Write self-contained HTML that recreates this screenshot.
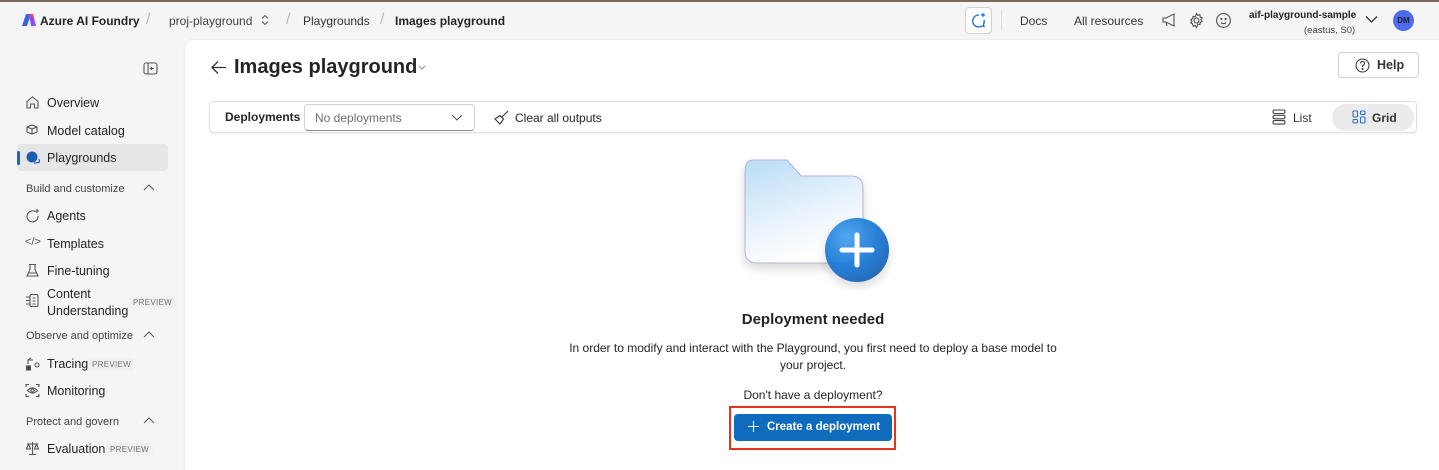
<!DOCTYPE html>
<html><head><meta charset="utf-8"><style>
*{box-sizing:border-box;margin:0;padding:0}
body{width:1439px;height:463px;overflow:hidden;background:#f5f5f5;font-family:"Liberation Sans",sans-serif;color:#242424;position:relative;font-size:12px}
.a{position:absolute;white-space:nowrap}
.top{position:absolute;left:0;top:0;width:1439px;height:2px;background:#7a6a5a}
.card{position:absolute;left:185px;top:40px;width:1254px;height:430px;background:#fff;border-radius:8px 0 0 0;box-shadow:0 0 2px rgba(0,0,0,.12)}
.sep{color:#bbb;font-size:16px}
.nav{font-size:12.5px;color:#242424}
.sec{font-size:11px;color:#424242}
.pv{font-size:8px;color:#707070;background:#f0f0f0;border-radius:4px;padding:2px 4px;letter-spacing:.3px}
svg{position:absolute}
</style></head><body>
<div class="top"></div>
<svg style="left:22px;top:13px" width="14" height="14" viewBox="0 0 14 14"><path d="M4 1h5l-4 12H0z" fill="#3b62e8"/><path d="M7 1h4l3 12H9z" fill="#8b4ef0"/><path d="M8 1h3l1 4H7z" fill="#e0408a"/></svg>
<div class="a" style="left:40px;top:14px;font-size:12px;font-weight:bold">Azure AI Foundry</div>
<div class="a sep" style="left:146px;top:11px">/</div>
<div class="a" style="left:169px;top:14px;color:#424242;font-size:12px">proj-playground</div>
<svg style="left:261px;top:14px" width="8" height="12" viewBox="0 0 8 12" fill="none" stroke="#555" stroke-width="1"><path d="M1 4.5l3-3 3 3M1 7.5l3 3 3-3"/></svg>
<div class="a sep" style="left:286px;top:11px">/</div>
<div class="a" style="left:303px;top:14px;color:#333;font-size:12px">Playgrounds</div>
<div class="a sep" style="left:380px;top:11px">/</div>
<div class="a" style="left:395px;top:14px;font-weight:bold;font-size:12px">Images playground</div>
<div class="a" style="left:965px;top:7px;width:27px;height:27px;border:1px solid #d1d1d1;border-radius:4px;background:#fff"></div>
<svg style="left:970px;top:12px" width="17" height="17" viewBox="0 0 17 17"><path d="M9 3a6 6 0 1 0 3 11l2 .5-.5-2A6 6 0 0 0 14 8" fill="none" stroke="#1a6fd6" stroke-width="1.3"/><path d="M13 1v4M11 3h4" stroke="#1a6fd6" stroke-width="1.2"/></svg>
<div class="a" style="left:1001px;top:10px;width:1px;height:20px;background:#ddd"></div>
<div class="a" style="left:1020px;top:14px;color:#333;font-size:12px">Docs</div>
<div class="a" style="left:1074px;top:14px;color:#333;font-size:12px">All resources</div>
<svg style="left:1161px;top:12px" width="16" height="16" viewBox="0 0 16 16" fill="none" stroke="#555" stroke-width="1.1"><path d="M2 6h3l8-4v12l-8-4H2zM5 10l1 4"/></svg>
<svg style="left:1188px;top:12px" width="17" height="17" viewBox="0 0 16 16" fill="none" stroke="#555" stroke-width="1.1"><circle cx="8" cy="8" r="2.3"/><path d="M8 1.5l1.2 1.6 2-.5.3 2 1.8 1-1 1.6 1 1.7-1.8.9-.3 2-2-.4L8 14.5l-1.2-1.6-2 .4-.3-2-1.8-1 1-1.6-1-1.6 1.8-1 .3-2 2 .5z"/></svg>
<svg style="left:1215px;top:12px" width="17" height="17" viewBox="0 0 16 16" fill="none" stroke="#555" stroke-width="1.1"><circle cx="8" cy="8" r="6.5"/><circle cx="6" cy="6.5" r=".5" fill="#555"/><circle cx="10" cy="6.5" r=".5" fill="#555"/><path d="M5.5 10q2.5 2 5 0"/></svg>
<div class="a" style="left:1249px;top:10px;font-size:10px;font-weight:bold">aif-playground-sample</div>
<div class="a" style="left:1304px;top:25px;font-size:9.5px;color:#424242">(eastus, S0)</div>
<svg style="left:1365px;top:15px" width="13" height="9" viewBox="0 0 13 9"><path d="M1 1.5l5.5 5.5 5.5-5.5" fill="none" stroke="#333" stroke-width="1.3"/></svg>
<div class="a" style="left:1393px;top:10px;width:21px;height:21px;border-radius:50%;background:#4f6bed;color:#1a1a3a;font-size:8px;font-weight:bold;text-align:center;line-height:21px">DM</div>
<!-- sidebar -->
<svg style="left:143px;top:62px" width="15" height="13" viewBox="0 0 15 13" fill="none" stroke="#555" stroke-width="1.1"><rect x="1" y="1" width="13" height="11" rx="2"/><path d="M5 1v11M11 6.5H7.5M9 5l-1.5 1.5L9 8"/></svg>
<svg style="left:25px;top:95px" width="15" height="15" viewBox="0 0 15 15" fill="none" stroke="#555" stroke-width="1.1"><path d="M2 6.5L7.5 2 13 6.5V13H9.5V9h-4v4H2z"/></svg>
<div class="a nav" style="left:47px;top:96px">Overview</div>
<svg style="left:25px;top:123px" width="15" height="15" viewBox="0 0 15 15" fill="none" stroke="#555" stroke-width="1.1"><path d="M7 2l5 2v5l-5 2-5-2V4zM2 4l5 2 5-2M7 6v5"/></svg>
<div class="a nav" style="left:47px;top:124px">Model catalog</div>
<div class="a" style="left:17px;top:144px;width:151px;height:27px;background:#e6e6e6;border-radius:4px"></div>
<div class="a" style="left:17px;top:151px;width:3px;height:14px;background:#0f6cbd;border-radius:2px"></div>
<svg style="left:25px;top:150px" width="16" height="16" viewBox="0 0 16 16"><circle cx="7" cy="7" r="5.5" fill="#1b5fb5"/><path d="M9 13q4 0 5.5-1L14 9" fill="none" stroke="#1b5fb5" stroke-width="1.2"/></svg>
<div class="a nav" style="left:47px;top:151px">Playgrounds</div>
<div class="a sec" style="left:26px;top:183px">Build and customize</div>
<svg style="left:143px;top:184px" width="12" height="7" viewBox="0 0 12 7"><path d="M1 6l5-5 5 5" fill="none" stroke="#555" stroke-width="1"/></svg>
<svg style="left:25px;top:208px" width="15" height="15" viewBox="0 0 15 15" fill="none" stroke="#555" stroke-width="1.1"><path d="M10 3.5A5.5 5.5 0 1 0 13 8"/><path d="M12 1v4M10 3h4"/></svg>
<div class="a nav" style="left:47px;top:209px">Agents</div>
<div class="a" style="left:25px;top:236px;font-size:11px;color:#555">&lt;/&gt;</div>
<div class="a nav" style="left:47px;top:237px">Templates</div>
<svg style="left:25px;top:263px" width="15" height="15" viewBox="0 0 15 15" fill="none" stroke="#555" stroke-width="1.1"><path d="M4 1.5h7M5 1.5v5L2 13h11l-3-6.5v-5M3.5 10h8"/></svg>
<div class="a nav" style="left:47px;top:264px">Fine-tuning</div>
<svg style="left:25px;top:293px" width="15" height="15" viewBox="0 0 15 15" fill="none" stroke="#555" stroke-width="1.1"><rect x="5" y="1.5" width="8" height="12" rx="1.5"/><path d="M1 4h4M1 7.5h4M1 11h4M7.5 5h3M7.5 8h3M7.5 11h3"/></svg>
<div class="a nav" style="left:47px;top:287px">Content</div>
<div class="a nav" style="left:47px;top:304px">Understanding</div>
<div class="a pv" style="left:129px;top:296px">PREVIEW</div>
<div class="a sec" style="left:26px;top:330px">Observe and optimize</div>
<svg style="left:143px;top:331px" width="12" height="7" viewBox="0 0 12 7"><path d="M1 6l5-5 5 5" fill="none" stroke="#555" stroke-width="1"/></svg>
<svg style="left:25px;top:356px" width="16" height="15" viewBox="0 0 16 15" fill="none" stroke="#555" stroke-width="1.1"><circle cx="12" cy="9" r="2"/><rect x="1.5" y="10" width="4" height="4" fill="#444"/><path d="M3 8V4l3-2M3 4h5"/></svg>
<div class="a nav" style="left:47px;top:357px">Tracing</div>
<div class="a pv" style="left:88px;top:358px">PREVIEW</div>
<svg style="left:25px;top:383px" width="15" height="15" viewBox="0 0 15 15" fill="none" stroke="#555" stroke-width="1.1"><path d="M1 4V1.5h3M11 1.5h3V4M1 11v2.5h3M11 13.5h3V11"/><path d="M2.5 7.5q5-5 10 0q-5 5-10 0z"/><circle cx="7.5" cy="7.5" r="1.5"/></svg>
<div class="a nav" style="left:47px;top:384px">Monitoring</div>
<div class="a sec" style="left:26px;top:416px">Protect and govern</div>
<svg style="left:143px;top:417px" width="12" height="7" viewBox="0 0 12 7"><path d="M1 6l5-5 5 5" fill="none" stroke="#555" stroke-width="1"/></svg>
<svg style="left:25px;top:441px" width="15" height="15" viewBox="0 0 15 15" fill="none" stroke="#555" stroke-width="1.1"><path d="M7.5 1v12M4 13.5h7M2 3h11M3.5 3L1.5 8h4zM11.5 3l-2 5h4z"/></svg>
<div class="a nav" style="left:47px;top:442px">Evaluation</div>
<div class="a pv" style="left:106px;top:443px">PREVIEW</div>
<!-- main -->
<div class="card"></div>
<svg style="left:210px;top:60px" width="17" height="15" viewBox="0 0 17 15"><path d="M16 7.5H2M8 1.5l-6 6 6 6" fill="none" stroke="#333" stroke-width="1.3"/></svg>
<div class="a" style="left:234px;top:56px;font-size:20px;font-weight:bold;color:#242424">Images playground</div>
<svg style="left:418px;top:65px" width="8" height="5" viewBox="0 0 8 5"><path d="M1 1l3 3 3-3" fill="none" stroke="#888" stroke-width="1"/></svg>
<div class="a" style="left:1338px;top:52px;width:81px;height:26px;border:1px solid #d1d1d1;border-radius:4px;background:#fff"></div>
<svg style="left:1355px;top:58px" width="15" height="15" viewBox="0 0 15 15" fill="none" stroke="#333" stroke-width="1"><circle cx="7.5" cy="7.5" r="6.5"/><path d="M5.5 5.5q0-2 2-2t2 2q0 1.3-2 2.2V9"/><circle cx="7.5" cy="11" r=".5" fill="#333"/></svg>
<div class="a" style="left:1377px;top:58px;font-size:12.5px;font-weight:bold;color:#333">Help</div>
<div class="a" style="left:209px;top:101px;width:1208px;height:32px;border:1px solid #e0e0e0;border-radius:4px;background:#fff;box-shadow:0 1px 2px rgba(0,0,0,.06)"></div>
<div class="a" style="left:225px;top:110px;font-weight:bold;font-size:12px">Deployments</div>
<div class="a" style="left:304px;top:104px;width:171px;height:27px;border:1px solid #d1d1d1;border-bottom-color:#888;border-radius:4px;background:#fff"></div>
<div class="a" style="left:315px;top:111px;color:#6e6e6e;font-size:12px">No deployments</div>
<svg style="left:451px;top:114px" width="12" height="7" viewBox="0 0 12 7"><path d="M1 1l5 5 5-5" fill="none" stroke="#555" stroke-width="1.1"/></svg>
<svg style="left:494px;top:110px" width="15" height="15" viewBox="0 0 15 15" fill="none" stroke="#333" stroke-width="1.1"><path d="M14 1L8 7M6 5.5l3.5 3.5L6 14 1 9z"/></svg>
<div class="a" style="left:515px;top:111px;color:#242424;font-size:12px">Clear all outputs</div>
<svg style="left:1272px;top:109px" width="14" height="16" viewBox="0 0 14 16" fill="none" stroke="#444" stroke-width="1.1"><rect x="1" y="1" width="12" height="3.5" rx="1.5"/><rect x="1" y="6.3" width="12" height="3.5" rx="1.5"/><rect x="1" y="11.6" width="12" height="3.5" rx="1.5"/></svg>
<div class="a" style="left:1293px;top:111px;color:#333;font-size:12px">List</div>
<div class="a" style="left:1332px;top:104px;width:82px;height:27px;background:#ebebeb;border-radius:14px"></div>
<svg style="left:1352px;top:110px" width="14" height="14" viewBox="0 0 14 14" fill="none" stroke="#2a6fcb" stroke-width="1.1"><rect x="1" y="1" width="4.5" height="6" rx="1"/><rect x="8.5" y="1" width="4.5" height="3.5" rx="1"/><rect x="1" y="9.5" width="4.5" height="3.5" rx="1"/><rect x="8.5" y="7" width="4.5" height="6" rx="1"/></svg>
<div class="a" style="left:1372px;top:111px;font-weight:bold;color:#333;font-size:12px">Grid</div>
<svg style="left:735px;top:155px" width="165" height="135" viewBox="0 0 165 135">
<defs><linearGradient id="f" x1="0" y1="0" x2=".4" y2="1"><stop offset="0" stop-color="#b8dcf5"/><stop offset=".6" stop-color="#e8f3fc"/><stop offset="1" stop-color="#fff"/></linearGradient>
<radialGradient id="c" cx=".35" cy=".3" r=".8"><stop offset="0" stop-color="#4aa3ee"/><stop offset=".6" stop-color="#1a78d4"/><stop offset="1" stop-color="#1c5fb0"/></radialGradient>
<filter id="s" x="-20%" y="-20%" width="140%" height="150%"><feDropShadow dx="0" dy="5" stdDeviation="5" flood-color="#000" flood-opacity=".15"/></filter></defs>
<path d="M18 5h34l14 16h50q12 0 12 12v63q0 12-12 12H22q-12 0-12-12V17q0-12 8-12z" fill="url(#f)" stroke="#b9b4d8" stroke-width="1" filter="url(#s)"/>
<circle cx="122" cy="95" r="32" fill="url(#c)" opacity=".95" filter="url(#s)"/>
<path d="M122 80v30M107 95h30" stroke="#fff" stroke-width="5" stroke-linecap="round"/>
</svg>
<div class="a" style="left:0;width:1626px;text-align:center;top:311px;font-size:15px;font-weight:bold">Deployment needed</div>
<div class="a" style="left:0;width:1626px;text-align:center;top:341px;font-size:12px">In order to modify and interact with the Playground, you first need to deploy a base model to</div>
<div class="a" style="left:0;width:1626px;text-align:center;top:358px;font-size:12px">your project.</div>
<div class="a" style="left:0;width:1626px;text-align:center;top:388px;font-size:12px">Don't have a deployment?</div>
<div class="a" style="left:729px;top:406px;width:167px;height:44px;border:2px solid #e8321e"></div>
<div class="a" style="left:734px;top:414px;width:158px;height:27px;background:#0f6cbd;border-radius:4px"></div>
<svg style="left:748px;top:421px" width="11" height="11" viewBox="0 0 11 11"><path d="M5.5 0v11M0 5.5h11" stroke="#fff" stroke-width="1.1"/></svg>
<div class="a" style="left:767px;top:421px;color:#fff;font-size:11.5px;font-weight:bold">Create a deployment</div>
</body></html>
